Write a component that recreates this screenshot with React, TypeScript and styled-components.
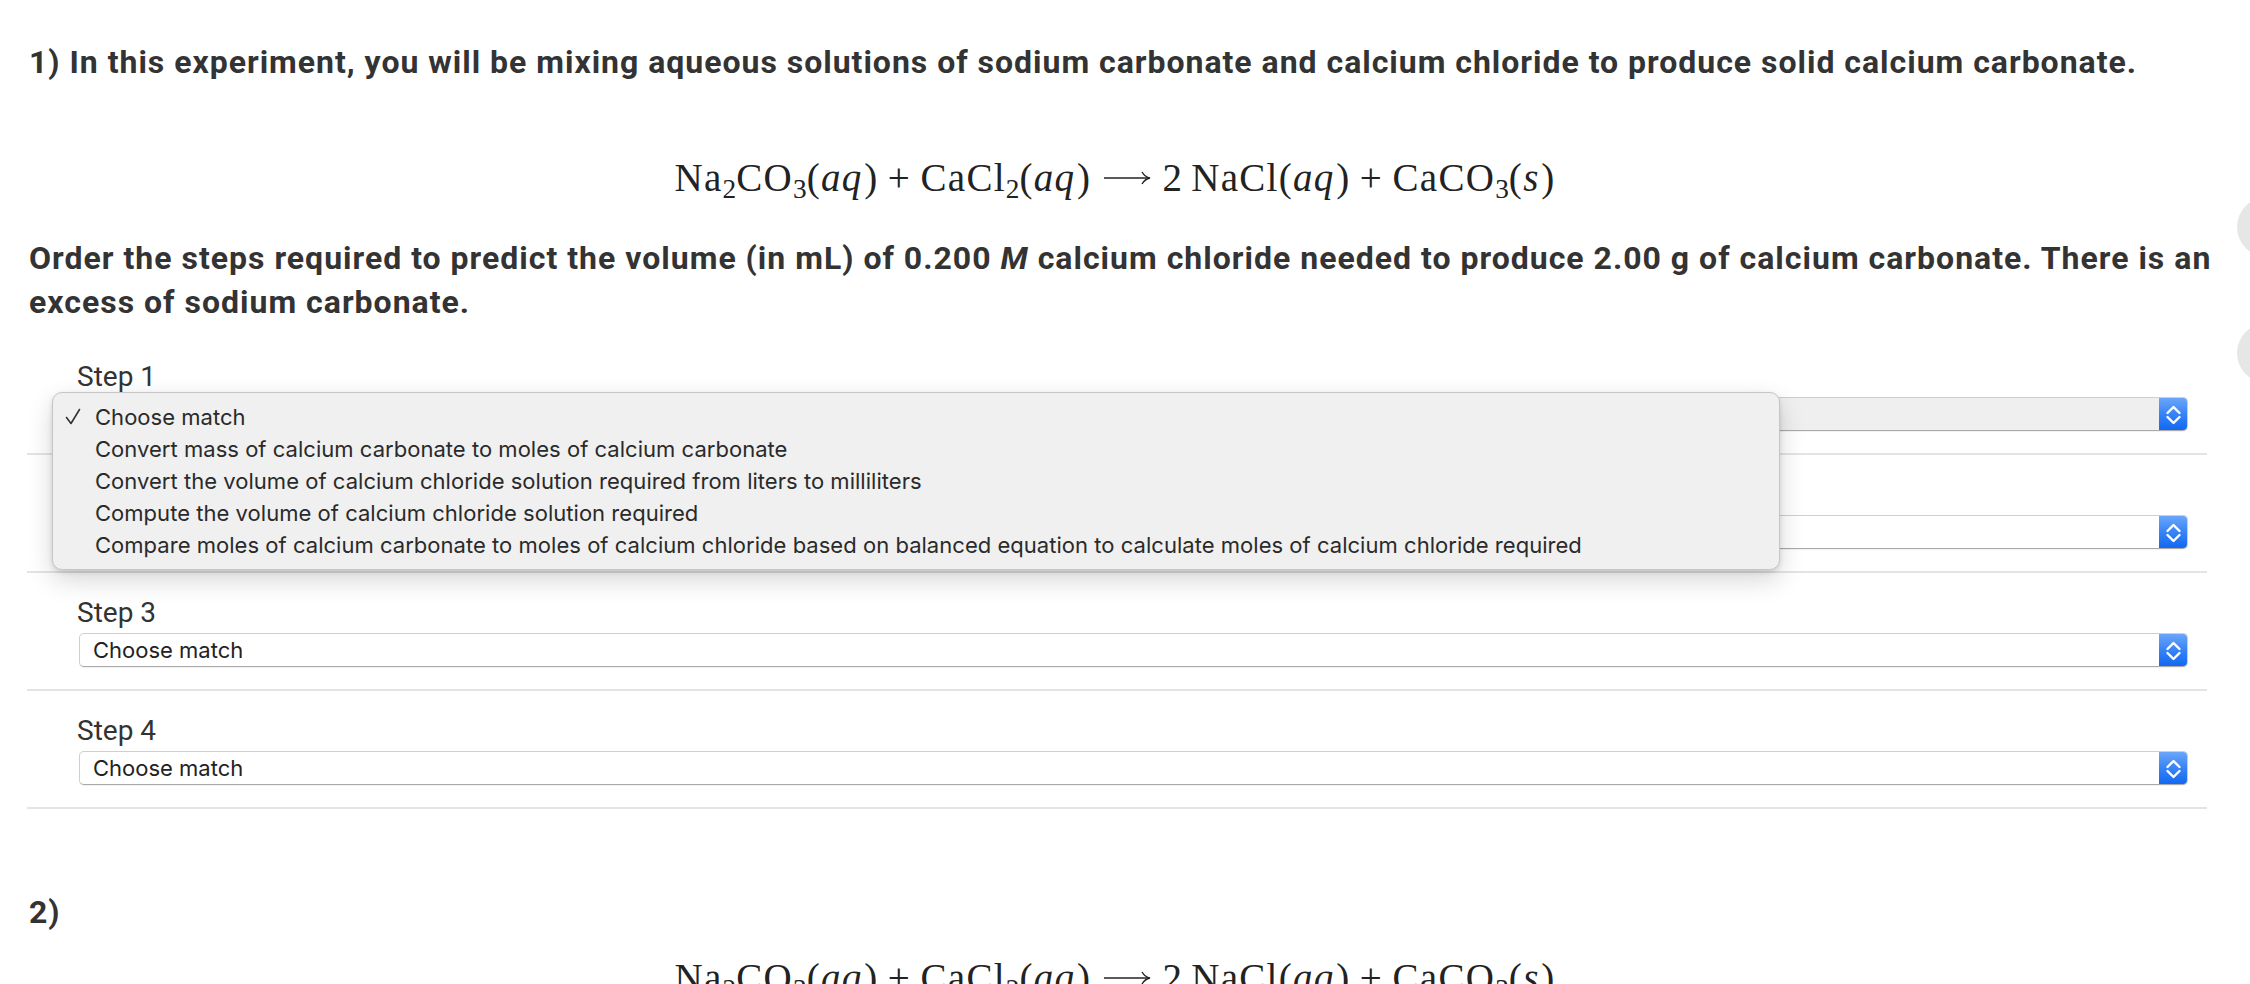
import React from "react";
import styled, { createGlobalStyle } from "styled-components";

const GlobalStyle = createGlobalStyle`
  html, body { margin: 0; padding: 0; background: #ffffff; overflow: hidden; }
  body { font-family: Roboto, "Liberation Sans", sans-serif; color: #333333; }
`;

const Page = styled.div`
  width: 2180px;
  padding: 40px 0 0 27px;
  box-sizing: content-box;
`;

const QuestionTitle = styled.h2`
  margin: 0;
  padding-left: 2px;
  font-family: Roboto, "Liberation Sans", sans-serif;
  font-weight: 700;
  font-size: 32px;
  line-height: 44px;
  letter-spacing: 0.98px;
  color: #333333;
`;

const Paragraph = styled.p<{ $top: number }>`
  margin: ${(p) => p.$top}px -40px 0 0;
  padding-left: 2px;
  font-weight: 700;
  font-size: 32px;
  line-height: 44px;
  letter-spacing: 1px;
  color: #333333;
`;

const Equation = styled.div<{ $top: number }>`
  margin-top: ${(p) => p.$top}px;
  display: flex;
  justify-content: center;
  align-items: baseline;
  height: 60px;
  line-height: 60px;
  font-family: "Liberation Serif", "DejaVu Serif", serif;
  font-size: 39px;
  letter-spacing: 1.3px;
  color: #222222;
  white-space: nowrap;
  padding-right: 4px;
`;

const Sub = styled.span`
  position: relative;
  top: 0.24em;
  font-size: 0.7em;
  line-height: 0;
  letter-spacing: 0;
`;

const Var = styled.i`
  font-style: italic;
  padding-right: 0.04em;
`;

const BinOp = styled.span`
  margin: 0 0.24em;
`;

const ArrowWrap = styled.span`
  display: inline-flex;
  align-self: center;
  margin: 0 0.3em;
`;

const ThinSpace = styled.span`
  display: inline-block;
  width: 0.2em;
`;

const StepList = styled.div`
  margin-top: 13px;
  display: flex;
  flex-direction: column;
`;

const StepRow = styled.div`
  position: relative;
  padding: 22px 19px 22px 0;
  border-bottom: 2px solid #e4e4e4;
  display: flex;
  flex-direction: column;
  gap: 2px;
`;

const StepLabel = styled.div`
  margin-left: 50px;
  font-family: Roboto, "Liberation Sans", sans-serif;
  font-size: 28px;
  line-height: 36px;
  color: #333333;
`;

const SelectBox = styled.div<{ $pressed?: boolean }>`
  margin-left: 52px;
  height: 34px;
  box-sizing: border-box;
  display: flex;
  align-items: center;
  border: 1px solid #cfcfcf;
  border-bottom-color: #aaaaaa;
  border-radius: 5px;
  background: ${(p) => (p.$pressed ? "#efefef" : "#ffffff")};
  box-shadow: 0 1px 1px rgba(0, 0, 0, 0.06);
  overflow: hidden;
`;

const SelectText = styled.span`
  flex: 1;
  padding-left: 13px;
  font-family: Inter, "Noto Sans", sans-serif;
  font-size: 22px;
  color: #222222;
`;

const Stepper = styled.span`
  width: 29px;
  height: 34px;
  margin: -1px -1px -1px 0;
  display: flex;
  align-items: center;
  justify-content: center;
  background: linear-gradient(#6ea8fb, #3c87f7 45%, #0f66f0);
  border-radius: 0 5px 5px 0;
`;

const Menu = styled.div`
  position: absolute;
  z-index: 5;
  top: 55px;
  left: 25px;
  width: 1728px;
  box-sizing: border-box;
  padding: 8px 0;
  background: #f0f0f0;
  border: 1px solid #c6c6c6;
  border-radius: 10px;
  box-shadow: 0 10px 26px rgba(0, 0, 0, 0.16), 0 2px 5px rgba(0, 0, 0, 0.12);
`;

const MenuItem = styled.div`
  display: flex;
  align-items: center;
  height: 32px;
  font-family: Inter, "Noto Sans", sans-serif;
  font-size: 22px;
  letter-spacing: 0.03px;
  color: #2a2a2a;
  white-space: nowrap;
`;

const Check = styled.span`
  width: 42px;
  padding-left: 12px;
  box-sizing: border-box;
  display: flex;
  align-items: center;
`;

const SideButton = styled.div<{ $top: number }>`
  position: fixed;
  top: ${(p) => p.$top}px;
  left: 2237px;
  width: 60px;
  height: 60px;
  border-radius: 50%;
  background: #e5e7e7;
`;

const Chevrons = () => (
  <svg width="29" height="34" viewBox="0 0 29 34" fill="none">
    <polyline points="8.5,16 14.5,10 20.5,16" stroke="#fff" strokeWidth="2.4" strokeLinecap="round" strokeLinejoin="round" />
    <polyline points="8.5,20 14.5,26 20.5,20" stroke="#fff" strokeWidth="2.4" strokeLinecap="round" strokeLinejoin="round" />
  </svg>
);

const CheckMark = () => (
  <svg width="16" height="18" viewBox="0 0 16 18" fill="none">
    <path d="M1.5 9.5 L6 15.5 L14.5 1.5" stroke="#333" strokeWidth="1.6" strokeLinecap="round" strokeLinejoin="round" />
  </svg>
);

const LongArrow = () => (
  <svg width="48" height="20" viewBox="0 0 48 20" fill="none">
    <line x1="1" y1="10" x2="46" y2="10" stroke="#222" strokeWidth="1.6" />
    <path d="M39 4 Q42 9 47 10 Q42 11 39 16" stroke="#222" strokeWidth="1.4" fill="none" />
  </svg>
);

const ReactionEquation = ({ top }: { top: number }) => (
  <Equation $top={top}>
    <span>Na</span>
    <Sub>2</Sub>
    <span>CO</span>
    <Sub>3</Sub>
    <span>(</span>
    <Var>aq</Var>
    <span>)</span>
    <BinOp>+</BinOp>
    <span>CaCl</span>
    <Sub>2</Sub>
    <span>(</span>
    <Var>aq</Var>
    <span>)</span>
    <ArrowWrap>
      <LongArrow />
    </ArrowWrap>
    <span>2</span>
    <ThinSpace />
    <span>NaCl(</span>
    <Var>aq</Var>
    <span>)</span>
    <BinOp>+</BinOp>
    <span>CaCO</span>
    <Sub>3</Sub>
    <span>(</span>
    <Var>s</Var>
    <span>)</span>
  </Equation>
);

const options = [
  "Convert mass of calcium carbonate to moles of calcium carbonate",
  "Convert the volume of calcium chloride solution required from liters to milliliters",
  "Compute the volume of calcium chloride solution required",
  "Compare moles of calcium carbonate to moles of calcium chloride based on balanced equation to calculate moles of calcium chloride required",
];

const Step = ({ n, open }: { n: number; open?: boolean }) => (
  <StepRow>
    <StepLabel>Step {n}</StepLabel>
    <SelectBox $pressed={open}>
      <SelectText>Choose match</SelectText>
      <Stepper>
        <Chevrons />
      </Stepper>
    </SelectBox>
    {open && (
      <Menu>
        <MenuItem>
          <Check>
            <CheckMark />
          </Check>
          Choose match
        </MenuItem>
        {options.map((o) => (
          <MenuItem key={o}>
            <Check />
            {o}
          </MenuItem>
        ))}
      </Menu>
    )}
  </StepRow>
);

export default function App() {
  return (
    <>
      <GlobalStyle />
      <Page>
        <QuestionTitle>
          1) In this experiment, you will be mixing aqueous solutions of sodium carbonate and calcium chloride to
          produce solid calcium carbonate.
        </QuestionTitle>
        <ReactionEquation top={64} />
        <Paragraph $top={28}>
          Order the steps required to predict the volume (in mL) of 0.200 <i>M</i> calcium chloride needed to produce
          2.00 g of calcium carbonate. There is an excess of sodium carbonate.
        </Paragraph>
        <StepList>
          <Step n={1} open />
          <Step n={2} />
          <Step n={3} />
          <Step n={4} />
        </StepList>
        <Paragraph $top={81}>2)</Paragraph>
        <ReactionEquation top={14} />
      </Page>
      <SideButton $top={197} />
      <SideButton $top={323} />
    </>
  );
}
